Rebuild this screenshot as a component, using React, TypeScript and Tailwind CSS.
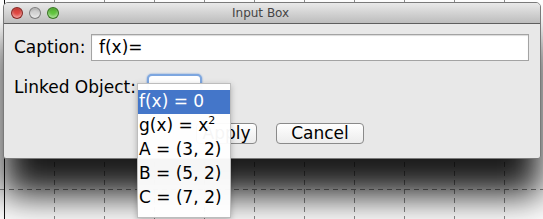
import React from "react";

const FONT = { fontFamily: '"DejaVu Sans", "Noto Sans", sans-serif' };

const ITEMS = [
  { key: "f", label: <>f(x) = 0</>, active: true },
  { key: "g", label: <>g(x) = x<sup className="text-[11px] -top-[7px]">2</sup></>, active: false },
  { key: "A", label: <>A = (3, 2)</>, active: false },
  { key: "B", label: <>B = (5, 2)</>, active: false },
  { key: "C", label: <>C = (7, 2)</>, active: false },
];

function GraphCanvas() {
  const xs = [54, 104, 154, 204, 254, 304, 354, 404, 454, 504];
  return (
    <svg className="absolute inset-0" width={543} height={219}>
      {xs.map((x) => (
        <line key={x} x1={x + 0.5} y1={0} x2={x + 0.5} y2={219} stroke="#8c8c8c" strokeDasharray="5 4" />
      ))}
      <line x1={0} y1={189.5} x2={543} y2={189.5} stroke="#8c8c8c" strokeDasharray="5 4" />
      <line x1={4.5} y1={0} x2={4.5} y2={219} stroke="#111" />
    </svg>
  );
}

function Light({ color }: { color: string }) {
  return (
    <span
      className={`block w-[12px] h-[12px] rounded-full border border-black/40 ${color} shadow-[inset_0_-2px_3px_rgba(255,255,255,0.5),inset_0_2px_2px_rgba(0,0,0,0.15)]`}
    />
  );
}

export default function App() {
  return (
    <div className="relative w-[543px] h-[219px] overflow-hidden bg-white" style={FONT}>
      <GraphCanvas />

      {/* dialog window */}
      <div className="absolute left-[3px] top-[2px] w-[538px] h-[157px] flex flex-col rounded-t-[5px] rounded-b-[3px] border border-[#7a7a7a] bg-[#e8e8e8] shadow-[0_36px_36px_rgba(0,0,0,0.9)] overflow-hidden">
        {/* title bar */}
        <div className="h-[21px] flex items-center border-b border-[#5e5e5e] bg-gradient-to-b from-[#e9e9e9] to-[#bdbdbd] shrink-0">
          <div className="flex items-center gap-[6px] pl-[7px]">
            <Light color="bg-[#e0443e]" />
            <Light color="bg-[#d2d2d2]" />
            <Light color="bg-[#5ec33a]" />
          </div>
          <span className="ml-[173px] text-[12px] text-[#454545] leading-none">Input Box</span>
        </div>

        {/* body */}
        <div className="flex flex-col pl-[10px] pr-[11px] pt-[10px] text-[17px] text-black">
          <div className="flex items-center h-[27px]">
            <span className="w-[77px] shrink-0">Caption:</span>
            <div className="flex-1 h-[27px] flex items-center bg-white border border-[#a3a3a3] shadow-[inset_0_1px_1px_rgba(0,0,0,0.15)] pl-[7px]">
              f(x)=
            </div>
          </div>

          <div className="flex items-center h-[28px] mt-[13px]">
            <span className="w-[133px] shrink-0">Linked Object:</span>
            <div className="w-[55px] h-[28px] rounded-[5px] border-2 border-[#7ea7e0] bg-white shadow-[0_0_2px_#5b8fd6]" />
          </div>

          <div className="flex gap-[19px] mt-[21px] pl-[182px]">
            <button className="w-[61px] h-[21px] rounded-[4px] border border-[#8a8a8a] bg-gradient-to-b from-white to-[#ececec] text-[17px] leading-none">
              Apply
            </button>
            <button className="w-[88px] h-[21px] rounded-[4px] border border-[#8a8a8a] bg-gradient-to-b from-white to-[#ececec] text-[17px] leading-none">
              Cancel
            </button>
          </div>
        </div>
      </div>

      {/* combo dropdown list */}
      <div className="absolute left-[137px] top-[83px] w-[94px] h-[135px] border border-[#bdbdbd] bg-white/[0.96] pt-[6px] shadow-[0_2px_6px_rgba(0,0,0,0.25)]">
        {ITEMS.map((it) => (
          <div
            key={it.key}
            className={`h-[24px] flex items-center pl-[1px] text-[17px] whitespace-nowrap ${
              it.active ? "bg-[#4476c9] text-white" : "text-black"
            }`}
          >
            <span>{it.label}</span>
          </div>
        ))}
      </div>
    </div>
  );
}
